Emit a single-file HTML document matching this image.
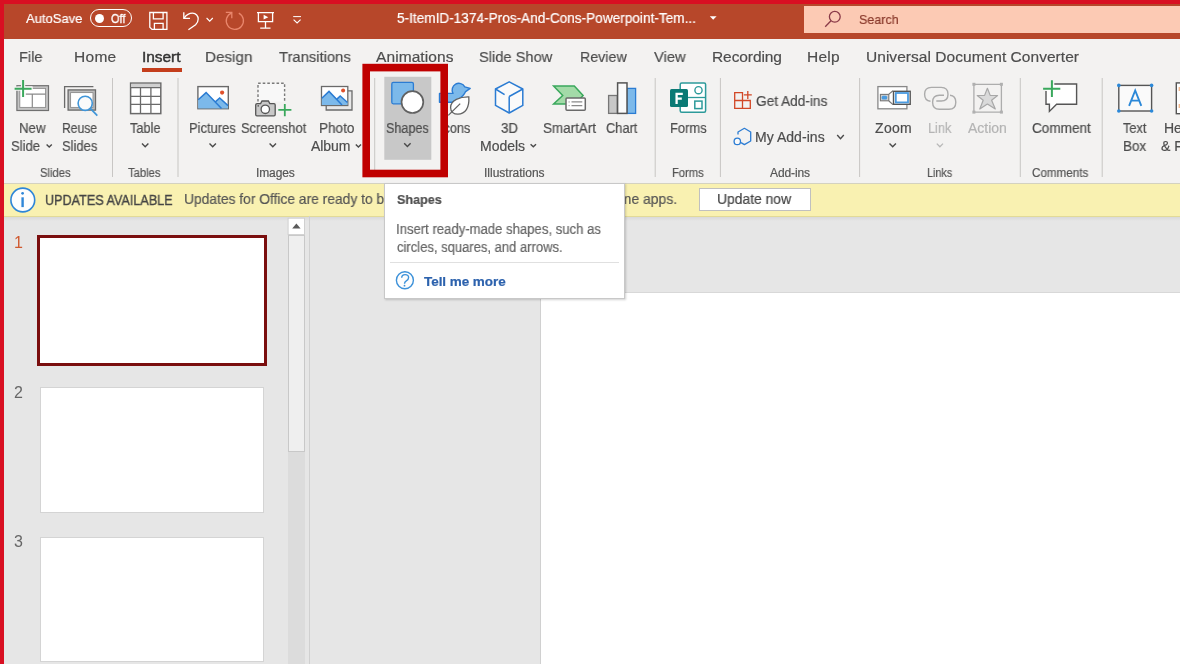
<!DOCTYPE html>
<html><head><meta charset="utf-8"><style>
html,body{margin:0;padding:0;width:1180px;height:664px;overflow:hidden;background:#e6e6e6;position:relative}
.t{position:absolute;white-space:nowrap;font-family:"Liberation Sans",sans-serif;will-change:transform;-webkit-text-stroke:0.2px currentColor}
.b{position:absolute}
svg{position:absolute;overflow:visible}
</style></head><body>
<!-- title bar -->
<div class="b" style="left:0;top:0;width:1180px;height:39px;background:#b7472a"></div>
<div class="b" style="left:804px;top:6px;width:376px;height:26.5px;background:#fccab4"></div>
<div class="b" style="left:90px;top:9px;width:40px;height:16px;border:1.4px solid #fff;border-radius:10px"></div>
<div class="b" style="left:94.6px;top:13.7px;width:9.2px;height:9.2px;border-radius:50%;background:#fff"></div>
<svg width="1180" height="664" viewBox="0 0 1180 664" style="left:0;top:0">
<g fill="none" stroke="#fff" stroke-width="1.3" stroke-linejoin="miter">
 <path d="M149.8 12.5 H166.9 V29.4 H152 L149.8 27.2 Z"/>
 <path d="M153.4 12.5 V18.9 H163.1 V12.5"/>
 <path d="M154.4 29.4 V23.4 H163.1 V29.4"/>
 <path d="M183.8 12.2 V18.4 H190"/>
 <path d="M184.2 18 C186 15.5 189 13.2 192.5 13.2 C196 13.2 198.2 16 198.2 19 C198.2 21.5 197 23.3 195.6 24.7 L188.4 29.8"/>
 <path d="M206.6 18 L209.7 21.1 L212.8 18" stroke-width="1.1"/>
 <path d="M257 12.6 H274 M258.4 12.6 V21.6 H272.6 V12.6 M265.5 21.6 V28.2 M260.2 28.2 H270.5"/>
 <path d="M293.2 16.6 H301" stroke-width="1"/>
 <path d="M293.6 19.6 L297.1 23 L300.6 19.6" stroke-width="1.1"/>
</g>
<path d="M263.6 14.8 L268.3 17.2 L263.6 19.6 Z" fill="#fff"/>
<g fill="none" stroke="#e9866c" stroke-width="1.3">
 <path d="M238.8 13.2 A8.6 8.6 0 1 1 231.8 12.8"/>
 <path d="M225.8 12.4 H231.8 V18.2"/>
</g>
<path d="M709.8 16.2 H716.6 L713.2 19.8 Z" fill="#fff"/>
<g fill="none" stroke="#8a3a48" stroke-width="1.3">
 <circle cx="834.8" cy="16.8" r="5.4"/>
 <path d="M831 20.8 L825.2 26.8"/>
</g>
</svg>
<!-- ribbon -->
<div class="b" style="left:0;top:39px;width:1180px;height:144px;background:#f3f2f1"></div>
<div class="b" style="left:142px;top:68px;width:40px;height:4px;background:#c43e1c"></div>
<svg width="1180" height="664" viewBox="0 0 1180 664" style="left:0;top:0">
<!-- separators -->
<g fill="#c8c6c4">
 <rect x="112" y="78" width="1" height="99"/>
 <rect x="177.5" y="78" width="1" height="99"/>
 <rect x="374.2" y="78" width="1" height="92"/>
 <rect x="654.7" y="78" width="1" height="99"/>
 <rect x="719.9" y="78" width="1" height="99"/>
 <rect x="859.1" y="78" width="1" height="99"/>
 <rect x="1019.8" y="78" width="1" height="99"/>
 <rect x="1101.7" y="78" width="1" height="99"/>
</g>
<!-- shapes button bg -->
<rect x="384.3" y="76.8" width="47" height="83" fill="#c8c8c8"/>

<!-- New Slide -->
<rect x="16.9" y="85.7" width="31.6" height="24.8" fill="#c4c4c4" stroke="#707070" stroke-width="1.2"/>
<rect x="19.8" y="88.4" width="25.8" height="19" fill="#fff" stroke="#8c8c8c" stroke-width="0.9"/>
<path d="M25.7 94.1 H45.8 M32.3 94.1 V107.8" fill="none" stroke="#8a8a8a" stroke-width="1.2"/>
<path d="M14 88.7 H32.5 M23.1 79.5 V97.8" stroke="#f3f2f1" stroke-width="4.2" fill="none"/>
<path d="M23.1 88.7 H32.5 M23.1 88.7 V97.8" stroke="#fff" stroke-width="4.2" fill="none"/>
<path d="M14.6 88.7 H31.6 M23.1 80 V97.1" stroke="#3aa85c" stroke-width="2" fill="none"/>

<!-- Reuse Slides -->
<path d="M64.6 108.1 V86.6 H93.4" fill="none" stroke="#6a6a6a" stroke-width="1.3"/>
<rect x="68.1" y="89.9" width="27.4" height="20.2" fill="#bdbdbd" stroke="#6a6a6a" stroke-width="1.3"/>
<rect x="70.6" y="92.6" width="22.4" height="14.8" fill="#fff" stroke="#8c8c8c" stroke-width="0.9"/>
<circle cx="85.2" cy="103.3" r="7.1" fill="#fafafa" stroke="#3f95d8" stroke-width="1.6"/>
<path d="M90.3 108.4 L97.3 115.6" stroke="#3f95d8" stroke-width="1.7"/>

<!-- Table -->
<rect x="130.6" y="83.1" width="30.2" height="30.5" fill="#fff" stroke="#6a6a6a" stroke-width="1.5"/>
<rect x="131.3" y="83.8" width="28.8" height="3.6" fill="#d0d0d0"/>
<path d="M130.6 87.6 H160.8 M130.6 96.3 H160.8 M130.6 104.4 H160.8 M140.5 87.6 V113.6 M150.9 87.6 V113.6" stroke="#6a6a6a" stroke-width="1.3" fill="none"/>

<!-- Pictures -->
<rect x="197.9" y="86.6" width="30.4" height="22.1" fill="#fff" stroke="#6a6a6a" stroke-width="1.4"/>
<path d="M198.2 99.7 L206.1 92.6 L215.6 101.6 L219.7 97.9 L228 105.6 V108.4 H198.2 Z" fill="#7cb9ea"/>
<path d="M198.2 99.7 L206.1 92.6 L221.5 108.4 M215.6 101.6 L219.7 97.9 L228 105.6" fill="none" stroke="#2b7cd3" stroke-width="1.5"/>
<circle cx="222.1" cy="92.6" r="2.1" fill="#e0502a"/>

<!-- Screenshot -->
<path d="M258 101.5 V83.2 H284.6 V101.5" fill="#f8f8f8" stroke="#7a7a7a" stroke-width="1.4" stroke-dasharray="2.6 2"/>
<path d="M255.7 105 Q255.7 103.6 257.1 103.6 H260.6 L262 101 H268.4 L269.8 103.6 H274 Q275.2 103.6 275.2 105 V114.6 Q275.2 115.8 274 115.8 H256.9 Q255.7 115.8 255.7 114.6 Z" fill="#c8c8c8" stroke="#555" stroke-width="1.3"/>
<circle cx="265.3" cy="109.3" r="4.2" fill="#fff" stroke="#555" stroke-width="1.3"/>
<circle cx="258.2" cy="105.9" r="0.8" fill="#555"/>
<path d="M278.3 109.9 H291.4 M284.8 103.9 V116.2" stroke="#3aa85c" stroke-width="1.8" fill="none"/>

<!-- Photo Album -->
<path d="M347.8 90.9 H352 V110 H326.2 V105.5" fill="#e8e8e8" stroke="#6a6a6a" stroke-width="1.3"/>
<rect x="321.5" y="86.5" width="26.3" height="19" fill="#fff" stroke="#6a6a6a" stroke-width="1.3"/>
<path d="M321.8 98.2 L329 91.4 L337.2 98.9 L340.2 96 L347.5 102.5 V105 H321.8 Z" fill="#7cb9ea"/>
<path d="M321.8 98.2 L329 91.4 L342 105 M337.2 98.9 L340.2 96 L347.5 102.5" fill="none" stroke="#2b7cd3" stroke-width="1.5"/>
<circle cx="343.1" cy="90.6" r="2" fill="#e0502a"/>

<!-- Shapes -->
<rect x="391.8" y="82.4" width="21.6" height="21.4" rx="1.5" fill="#7cb9ea" stroke="#2b7cd3" stroke-width="1.3"/>
<circle cx="412.4" cy="102.1" r="10.9" fill="#fff" stroke="#616161" stroke-width="1.7"/>

<!-- Icons -->
<path d="M439.5 102.2 V93.4 H453 A6.6 6.6 0 1 1 464.8 86.8 L470.2 88.4 L465.6 91.6 Q463.6 96.4 458.4 99.2 L452.4 102.2 Z" fill="#7cb9ea" stroke="#2b7cd3" stroke-width="1.4" stroke-linejoin="round"/>
<path d="M468.8 96.8 C460 96.6 450.6 100.2 450.6 107.4 C450.6 111.8 453.8 114.1 457.9 114.1 C465.2 114.1 469.6 108 468.8 96.8 Z" fill="#fff" stroke="#616161" stroke-width="1.3"/>
<path d="M460.2 103.6 L448.3 115.4" stroke="#616161" stroke-width="1.3"/>

<!-- 3D Models -->
<path d="M509.2 81.8 L522.8 89 V105.4 L509.2 113 L495.5 105.4 V89 Z" fill="#fafafa" stroke="#2b7cd3" stroke-width="1.5" stroke-linejoin="round"/>
<path d="M509.2 96.5 L522.8 89 M509.2 96.5 V113 M495.5 89 L504.6 94.6" fill="none" stroke="#2b7cd3" stroke-width="1.5"/>

<!-- SmartArt -->
<path d="M553.6 86 H574.3 L583.1 95.5 L575 104 H553.6 L562.7 95.5 Z" fill="#a3dba8" stroke="#3aa85c" stroke-width="1.5" stroke-linejoin="miter"/>
<rect x="566" y="97.9" width="19.3" height="12.3" rx="1" fill="#fff" stroke="#6a6a6a" stroke-width="1.5"/>
<path d="M571.5 101.9 H582.3 M571.5 105.6 H582.3" stroke="#8a8a8a" stroke-width="1.1"/>
<circle cx="569.1" cy="101.9" r="0.6" fill="#8a8a8a"/><circle cx="569.1" cy="105.6" r="0.6" fill="#8a8a8a"/>

<!-- Chart -->
<rect x="608.6" y="95.5" width="8.7" height="17.9" fill="#c8c8c8" stroke="#777" stroke-width="1.3"/>
<rect x="627" y="88.4" width="8.6" height="25" fill="#7cb9ea" stroke="#2b7cd3" stroke-width="1.3"/>
<rect x="617.6" y="82.9" width="9.4" height="30.5" fill="#fafafa" stroke="#555" stroke-width="1.5"/>

<!-- Forms -->
<rect x="680.2" y="83" width="25.4" height="29.2" rx="1.5" fill="#fff" stroke="#2d9a9a" stroke-width="1.5"/>
<path d="M680.2 97.5 H705.6" stroke="#2d9a9a" stroke-width="1.3"/>
<circle cx="698.5" cy="90.2" r="3.6" fill="none" stroke="#2d9a9a" stroke-width="1.4"/>
<rect x="694.8" y="101.1" width="7.2" height="7.5" fill="none" stroke="#2d9a9a" stroke-width="1.5"/>
<rect x="670" y="89" width="18" height="18" rx="1.5" fill="#0b7a75"/>
<path d="M676.6 104 V93.8 H682.8 M676.6 98.6 H681.8" fill="none" stroke="#fff" stroke-width="2.3"/>

<!-- Get Add-ins -->
<path d="M734.7 92.7 H742.5 V108.3 H734.7 Z M734.7 100.5 H750.3 V108.3 H742.5" fill="none" stroke="#d24726" stroke-width="1.3"/>
<path d="M743.8 94.9 H751.8 M747.8 90.9 V98.9" stroke="#d24726" stroke-width="1.3"/>

<!-- My Add-ins -->
<path d="M738 134.5 V132 L744.4 128.3 L750.7 132 V141 L744.4 144.6 L741 142.6" fill="none" stroke="#2b7cd3" stroke-width="1.3" stroke-linejoin="round"/>
<circle cx="737.3" cy="141.4" r="3.2" fill="#fafafa" stroke="#2b7cd3" stroke-width="1.3"/>

<!-- Zoom -->
<rect x="877.9" y="86.6" width="29" height="22.2" fill="#fff" stroke="#888" stroke-width="1.3"/>
<path d="M888.9 94.1 L893 90.8 M888.9 101 L893 104.6" stroke="#777" stroke-width="1.2"/>
<rect x="880.4" y="94.4" width="8.4" height="6.4" fill="#d0d0d0" stroke="#777" stroke-width="1.1"/>
<rect x="881.6" y="95.8" width="5.6" height="3.8" rx="1.5" fill="#4a9be0"/>
<rect x="893.5" y="91.3" width="16.7" height="13" fill="#fff" stroke="#555" stroke-width="1.4"/>
<rect x="895.8" y="93" width="12.2" height="9.4" fill="#fff" stroke="#4a9be0" stroke-width="1.8"/>

<!-- Link (disabled) -->
<g fill="none" stroke="#ababab" stroke-width="1.4">
 <path d="M930.5 101.2 Q924.6 100.6 924.6 94.2 Q924.6 87.4 931.4 87.4 H941.2 Q948 87.4 948 94.2 Q948 101 941.2 101 H936.3"/>
 <path d="M950 95.3 Q955.8 96 955.8 102.2 Q955.8 109.2 949 109.2 H939.4 Q932.6 109.2 932.6 102.2 Q932.6 95.2 939.4 95.2 H944"/>
</g>

<!-- Action (disabled) -->
<path d="M973.9 85 V111.5 M1001.4 85 V111.5 M975 84.4 H1000.3 M975 112.1 H1000.3" stroke="#adadad" stroke-width="1.3"/>
<g fill="#b0b0b0"><rect x="972.4" y="82.8" width="3" height="3"/><rect x="999.9" y="82.8" width="3" height="3"/><rect x="972.4" y="110.6" width="3" height="3"/><rect x="999.9" y="110.6" width="3" height="3"/></g>
<path d="M987.4 88.3 L990.2 95.4 L997.6 95.5 L991.6 100.2 L995.3 109 L987.4 104 L979.8 109 L983.2 100.2 L977.2 95.5 L984.6 95.4 Z" fill="#dadada" stroke="#a8a8a8" stroke-width="1.2" stroke-linejoin="round"/>

<!-- Comment -->
<path d="M1054.3 84 H1076.6 V104.2 H1056.6 L1049.4 111.4 V104.2 H1046 V91.1" fill="#fff" stroke="#555" stroke-width="1.4"/>
<path d="M1043.1 88.7 H1060.3 M1051.9 80.2 V97.1" stroke="#3aa85c" stroke-width="2" fill="none"/>

<!-- Text Box -->
<rect x="1118.8" y="85.4" width="32.8" height="25.6" fill="#fafafa" stroke="#555" stroke-width="1.4"/>
<g fill="#2b88d8"><circle cx="1118.8" cy="85.4" r="1.8"/><circle cx="1151.6" cy="85.4" r="1.8"/><circle cx="1118.8" cy="111" r="1.8"/><circle cx="1151.6" cy="111" r="1.8"/></g>
<path d="M1129.1 105.9 L1135.2 90.5 L1141.3 105.9 M1131.2 100.6 H1139.2" fill="none" stroke="#2b88d8" stroke-width="1.9"/>

<!-- Header & Footer (partial) -->
<rect x="1176.3" y="82.9" width="12" height="30.8" fill="#fff" stroke="#555" stroke-width="1.4"/>
<rect x="1178.6" y="87" width="2" height="4" fill="#f2b88f"/>
<rect x="1178.6" y="104" width="2" height="4" fill="#f2b88f"/>

<!-- chevrons -->
<g fill="none" stroke="#4a4a4a" stroke-width="1.4">
 <path d="M46.6 144.6 L49.2 147.1 L51.8 144.6"/>
 <path d="M142 143.6 L145.2 146.8 L148.4 143.6"/>
 <path d="M209.5 143.6 L212.7 146.8 L215.9 143.6"/>
 <path d="M269.6 143.6 L272.8 146.8 L276 143.6"/>
 <path d="M355.8 144.6 L358.4 147.1 L361 144.6"/>
 <path d="M404.2 143.3 L407.4 146.5 L410.6 143.3"/>
 <path d="M530.6 144.2 L533.3 146.8 L536 144.2"/>
 <path d="M837.2 135 L840.5 138.6 L843.8 135"/>
 <path d="M889.5 143.6 L892.7 146.8 L895.9 143.6"/>
</g>
<path d="M936.8 143.6 L939.9 146.8 L943 143.6" fill="none" stroke="#b8b8b8" stroke-width="1.3"/>
</svg>
<!-- update bar -->
<div class="b" style="left:0;top:216px;width:1180px;height:5px;background:linear-gradient(#d6d6d6,#e6e6e6)"></div>
<div class="b" style="left:0;top:182.5px;width:1180px;height:32px;background:#f9f1b1;border-top:1px solid #d4d2c0;border-bottom:0.6px solid #e2da98"></div>
<div class="b" style="left:699.2px;top:187.8px;width:110.3px;height:20.8px;background:#fff;border:1px solid #c0c0c0"></div>
<svg width="1180" height="664" viewBox="0 0 1180 664" style="left:0;top:0">
<circle cx="22.8" cy="200" r="11.9" fill="#fdfdfd" stroke="#2e86d8" stroke-width="1.6"/>
<circle cx="22.6" cy="193.3" r="1.35" fill="#2e86d8"/>
<path d="M22.6 197.3 V207.1" stroke="#2e86d8" stroke-width="2.4"/>
</svg>
<!-- panes -->
<div class="b" style="left:308.5px;top:216px;width:1px;height:448px;background:#d0d0d0"></div>
<div class="b" style="left:288px;top:235px;width:15px;height:215px;background:#efefef;border:1px solid #c8c8c8"></div>
<div class="b" style="left:288px;top:452px;width:17px;height:212px;background:#dcdcdc"></div>
<div class="b" style="left:37.3px;top:234.7px;width:223.4px;height:125.7px;background:#fff;border:3px solid #7a0e0e"></div>
<div class="b" style="left:40.1px;top:387.2px;width:221.5px;height:123.5px;background:#fff;border:1px solid #d4d4d4"></div>
<div class="b" style="left:40.1px;top:536.8px;width:221.5px;height:123.5px;background:#fff;border:1px solid #d4d4d4"></div>
<div class="b" style="left:540.4px;top:291.6px;width:640px;height:400px;background:#fff;border-left:1px solid #d0d0d0;border-top:1px solid #d8d8d8"></div>
<svg width="1180" height="664" viewBox="0 0 1180 664" style="left:0;top:0">
<rect x="288.1" y="218.2" width="16.4" height="16.4" fill="#fff" stroke="#d0d0d0" stroke-width="1"/>
<path d="M296.4 223.6 L300.6 228.6 H292.2 Z" fill="#5a5a5a"/>
</svg>
<div class="t" style="left:26.00px;top:12.27px;font-size:13.5px;line-height:13.5px;color:#fff;font-weight:400;letter-spacing:0.000px;transform:scaleX(0.9650);transform-origin:0 0;">AutoSave</div>
<div class="t" style="left:111.40px;top:12.64px;font-size:12px;line-height:12px;color:#fff;font-weight:400;letter-spacing:0.000px;transform:scaleX(0.9118);transform-origin:0 0;-webkit-text-stroke:0.35px currentColor;">Off</div>
<div class="t" style="left:397.00px;top:11.15px;font-size:14px;line-height:14px;color:#fff;font-weight:400;letter-spacing:0.000px;transform:scaleX(0.9725);transform-origin:0 0;">5-ItemID-1374-Pros-And-Cons-Powerpoint-Tem...</div>
<div class="t" style="left:858.60px;top:13.17px;font-size:13.5px;line-height:13.5px;color:#8a3a2c;font-weight:400;letter-spacing:0.000px;transform:scaleX(0.9275);transform-origin:0 0;">Search</div>
<div class="t" style="left:18.56px;top:48.68px;font-size:15.5px;line-height:15.5px;color:#4d4d4d;font-weight:400;letter-spacing:0.000px;transform:scaleX(0.9420);transform-origin:0 0;">File</div>
<div class="t" style="left:74.40px;top:48.68px;font-size:15.5px;line-height:15.5px;color:#4d4d4d;font-weight:400;letter-spacing:0.291px;">Home</div>
<div class="t" style="left:205.42px;top:48.68px;font-size:15.5px;line-height:15.5px;color:#4d4d4d;font-weight:400;letter-spacing:0.000px;transform:scaleX(0.9822);transform-origin:0 0;">Design</div>
<div class="t" style="left:278.80px;top:48.68px;font-size:15.5px;line-height:15.5px;color:#4d4d4d;font-weight:400;letter-spacing:0.000px;transform:scaleX(0.9539);transform-origin:0 0;">Transitions</div>
<div class="t" style="left:376.30px;top:48.68px;font-size:15.5px;line-height:15.5px;color:#4d4d4d;font-weight:400;letter-spacing:0.086px;">Animations</div>
<div class="t" style="left:479.30px;top:48.68px;font-size:15.5px;line-height:15.5px;color:#4d4d4d;font-weight:400;letter-spacing:0.000px;transform:scaleX(0.9457);transform-origin:0 0;">Slide Show</div>
<div class="t" style="left:579.58px;top:48.68px;font-size:15.5px;line-height:15.5px;color:#4d4d4d;font-weight:400;letter-spacing:0.000px;transform:scaleX(0.9185);transform-origin:0 0;">Review</div>
<div class="t" style="left:653.90px;top:48.68px;font-size:15.5px;line-height:15.5px;color:#4d4d4d;font-weight:400;letter-spacing:0.000px;transform:scaleX(0.9525);transform-origin:0 0;">View</div>
<div class="t" style="left:711.70px;top:48.68px;font-size:15.5px;line-height:15.5px;color:#4d4d4d;font-weight:400;letter-spacing:-0.091px;">Recording</div>
<div class="t" style="left:807.00px;top:48.68px;font-size:15.5px;line-height:15.5px;color:#4d4d4d;font-weight:400;letter-spacing:0.247px;">Help</div>
<div class="t" style="left:865.60px;top:48.68px;font-size:15.5px;line-height:15.5px;color:#4d4d4d;font-weight:400;letter-spacing:0.039px;">Universal Document Converter</div>
<div class="t" style="left:141.70px;top:48.68px;font-size:15.5px;line-height:15.5px;color:#333;font-weight:400;letter-spacing:-0.052px;-webkit-text-stroke:0.45px currentColor;">Insert</div>
<div class="t" style="left:18.65px;top:120.95px;font-size:14px;line-height:14px;color:#4d4d4d;font-weight:400;letter-spacing:0.000px;transform:scaleX(0.9464);transform-origin:0 0;">New</div>
<div class="t" style="left:61.84px;top:120.95px;font-size:14px;line-height:14px;color:#4d4d4d;font-weight:400;letter-spacing:0.000px;transform:scaleX(0.8644);transform-origin:0 0;">Reuse</div>
<div class="t" style="left:129.90px;top:120.95px;font-size:14px;line-height:14px;color:#4d4d4d;font-weight:400;letter-spacing:0.000px;transform:scaleX(0.9114);transform-origin:0 0;">Table</div>
<div class="t" style="left:188.67px;top:120.95px;font-size:14px;line-height:14px;color:#4d4d4d;font-weight:400;letter-spacing:0.000px;transform:scaleX(0.9259);transform-origin:0 0;">Pictures</div>
<div class="t" style="left:240.50px;top:120.95px;font-size:14px;line-height:14px;color:#4d4d4d;font-weight:400;letter-spacing:0.000px;transform:scaleX(0.9206);transform-origin:0 0;">Screenshot</div>
<div class="t" style="left:319.03px;top:120.95px;font-size:14px;line-height:14px;color:#4d4d4d;font-weight:400;letter-spacing:0.000px;transform:scaleX(0.9693);transform-origin:0 0;">Photo</div>
<div class="t" style="left:386.30px;top:120.95px;font-size:14px;line-height:14px;color:#4d4d4d;font-weight:400;letter-spacing:0.000px;transform:scaleX(0.8993);transform-origin:0 0;">Shapes</div>
<div class="t" style="left:440.10px;top:120.95px;font-size:14px;line-height:14px;color:#4d4d4d;font-weight:400;letter-spacing:0.000px;transform:scaleX(0.9026);transform-origin:0 0;">Icons</div>
<div class="t" style="left:500.70px;top:120.95px;font-size:14px;line-height:14px;color:#4d4d4d;font-weight:400;letter-spacing:0.000px;transform:scaleX(0.9502);transform-origin:0 0;">3D</div>
<div class="t" style="left:542.90px;top:120.95px;font-size:14px;line-height:14px;color:#4d4d4d;font-weight:400;letter-spacing:0.000px;transform:scaleX(0.9614);transform-origin:0 0;">SmartArt</div>
<div class="t" style="left:606.40px;top:120.95px;font-size:14px;line-height:14px;color:#4d4d4d;font-weight:400;letter-spacing:0.000px;transform:scaleX(0.9172);transform-origin:0 0;">Chart</div>
<div class="t" style="left:669.68px;top:120.95px;font-size:14px;line-height:14px;color:#4d4d4d;font-weight:400;letter-spacing:0.000px;transform:scaleX(0.9234);transform-origin:0 0;">Forms</div>
<div class="t" style="left:874.70px;top:120.95px;font-size:14px;line-height:14px;color:#4d4d4d;font-weight:400;letter-spacing:0.325px;">Zoom</div>
<div class="t" style="left:1031.50px;top:120.95px;font-size:14px;line-height:14px;color:#4d4d4d;font-weight:400;letter-spacing:0.000px;transform:scaleX(0.9689);transform-origin:0 0;">Comment</div>
<div class="t" style="left:1123.00px;top:120.95px;font-size:14px;line-height:14px;color:#4d4d4d;font-weight:400;letter-spacing:0.000px;transform:scaleX(0.9113);transform-origin:0 0;">Text</div>
<div class="t" style="left:1164.40px;top:120.95px;font-size:14px;line-height:14px;color:#4d4d4d;font-weight:400;letter-spacing:0.000px;">He</div>
<div class="t" style="left:928.29px;top:120.95px;font-size:14px;line-height:14px;color:#b4b4b4;font-weight:400;letter-spacing:0.000px;transform:scaleX(0.9072);transform-origin:0 0;">Link</div>
<div class="t" style="left:968.30px;top:120.95px;font-size:14px;line-height:14px;color:#b4b4b4;font-weight:400;letter-spacing:-0.005px;">Action</div>
<div class="t" style="left:11.30px;top:139.15px;font-size:14px;line-height:14px;color:#4d4d4d;font-weight:400;letter-spacing:0.000px;transform:scaleX(0.9348);transform-origin:0 0;">Slide</div>
<div class="t" style="left:62.20px;top:139.15px;font-size:14px;line-height:14px;color:#4d4d4d;font-weight:400;letter-spacing:0.000px;transform:scaleX(0.9258);transform-origin:0 0;">Slides</div>
<div class="t" style="left:310.80px;top:139.15px;font-size:14px;line-height:14px;color:#4d4d4d;font-weight:400;letter-spacing:-0.080px;">Album</div>
<div class="t" style="left:480.20px;top:139.15px;font-size:14px;line-height:14px;color:#4d4d4d;font-weight:400;letter-spacing:-0.006px;">Models</div>
<div class="t" style="left:1122.74px;top:139.15px;font-size:14px;line-height:14px;color:#4d4d4d;font-weight:400;letter-spacing:0.000px;transform:scaleX(0.9644);transform-origin:0 0;">Box</div>
<div class="t" style="left:1161.00px;top:139.15px;font-size:14px;line-height:14px;color:#4d4d4d;font-weight:400;letter-spacing:0.000px;">&amp; F</div>
<div class="t" style="left:755.50px;top:93.55px;font-size:14px;line-height:14px;color:#4d4d4d;font-weight:400;letter-spacing:0.000px;transform:scaleX(0.9753);transform-origin:0 0;">Get Add-ins</div>
<div class="t" style="left:754.50px;top:130.05px;font-size:14px;line-height:14px;color:#4d4d4d;font-weight:400;letter-spacing:0.042px;">My Add-ins</div>
<div class="t" style="left:39.80px;top:167.04px;font-size:12px;line-height:12px;color:#555;font-weight:400;letter-spacing:0.000px;transform:scaleX(0.9362);transform-origin:0 0;">Slides</div>
<div class="t" style="left:128.20px;top:167.04px;font-size:12px;line-height:12px;color:#555;font-weight:400;letter-spacing:0.000px;transform:scaleX(0.9341);transform-origin:0 0;">Tables</div>
<div class="t" style="left:255.60px;top:167.04px;font-size:12px;line-height:12px;color:#555;font-weight:400;letter-spacing:-0.110px;">Images</div>
<div class="t" style="left:483.60px;top:167.04px;font-size:12px;line-height:12px;color:#555;font-weight:400;letter-spacing:-0.008px;">Illustrations</div>
<div class="t" style="left:671.50px;top:167.04px;font-size:12px;line-height:12px;color:#555;font-weight:400;letter-spacing:0.000px;transform:scaleX(0.9325);transform-origin:0 0;">Forms</div>
<div class="t" style="left:769.60px;top:167.04px;font-size:12px;line-height:12px;color:#555;font-weight:400;letter-spacing:-0.115px;">Add-ins</div>
<div class="t" style="left:926.80px;top:167.04px;font-size:12px;line-height:12px;color:#555;font-weight:400;letter-spacing:0.000px;transform:scaleX(0.8996);transform-origin:0 0;">Links</div>
<div class="t" style="left:1032.30px;top:167.04px;font-size:12px;line-height:12px;color:#555;font-weight:400;letter-spacing:0.000px;transform:scaleX(0.9705);transform-origin:0 0;">Comments</div>
<div class="t" style="left:45.20px;top:192.65px;font-size:14px;line-height:14px;color:#444;font-weight:400;letter-spacing:0.000px;transform:scaleX(0.9011);transform-origin:0 0;-webkit-text-stroke:0.35px currentColor;">UPDATES AVAILABLE</div>
<div class="t" style="left:183.75px;top:192.23px;font-size:14.5px;line-height:14.5px;color:#555;font-weight:400;letter-spacing:0.000px;transform:scaleX(0.9525);transform-origin:0 0;">Updates for Office are ready to b</div>
<div class="t" style="left:605.16px;top:192.23px;font-size:14.5px;line-height:14.5px;color:#555;font-weight:400;letter-spacing:0.000px;transform:scaleX(0.9622);transform-origin:0 0;">some apps.</div>
<div class="t" style="left:716.64px;top:192.23px;font-size:14.5px;line-height:14.5px;color:#444;font-weight:400;letter-spacing:0.000px;transform:scaleX(0.9569);transform-origin:0 0;">Update now</div>
<div class="t" style="left:14.00px;top:234.76px;font-size:16px;line-height:16px;color:#d05a30;font-weight:400;letter-spacing:0.000px;-webkit-text-stroke:0;">1</div>
<div class="t" style="left:13.80px;top:384.56px;font-size:16px;line-height:16px;color:#666;font-weight:400;letter-spacing:0.000px;-webkit-text-stroke:0;">2</div>
<div class="t" style="left:13.80px;top:534.06px;font-size:16px;line-height:16px;color:#666;font-weight:400;letter-spacing:0.000px;-webkit-text-stroke:0;">3</div>
<!-- red highlight box -->
<svg width="1180" height="664" style="left:0;top:0"><rect x="366.2" y="67.6" width="78" height="105.9" fill="none" stroke="#c00000" stroke-width="7.6"/></svg>
<!-- tooltip -->
<div class="b" style="left:384.4px;top:183.4px;width:238.9px;height:113.4px;background:#fff;border:1px solid #c8c8c8;box-shadow:1px 1px 2px rgba(0,0,0,0.18)"></div>
<div class="b" style="left:389.7px;top:262px;width:229.3px;height:1px;background:#e0e0e0"></div>
<svg width="1180" height="664" viewBox="0 0 1180 664" style="left:0;top:0">
<circle cx="404.9" cy="280.2" r="8.5" fill="#fdfdfd" stroke="#3c91d9" stroke-width="1.4"/>
<path d="M401.7 277.8 Q401.7 274.6 405.1 274.6 Q408.6 274.6 408.6 277.6 Q408.6 279.6 406.3 280.8 Q404.5 281.8 404.5 283.8" fill="none" stroke="#3c91d9" stroke-width="1.4"/>
<circle cx="404.5" cy="285.7" r="0.9" fill="#3c91d9"/>
</svg>
<div class="t" style="left:396.90px;top:193.17px;font-size:13.5px;line-height:13.5px;color:#505050;font-weight:700;letter-spacing:0.000px;transform:scaleX(0.9324);transform-origin:0 0;">Shapes</div>
<div class="t" style="left:395.96px;top:222.15px;font-size:14px;line-height:14px;color:#666;font-weight:400;letter-spacing:0.000px;transform:scaleX(0.9367);transform-origin:0 0;">Insert ready-made shapes, such as</div>
<div class="t" style="left:396.90px;top:240.15px;font-size:14px;line-height:14px;color:#666;font-weight:400;letter-spacing:0.000px;transform:scaleX(0.9296);transform-origin:0 0;">circles, squares, and arrows.</div>
<div class="t" style="left:423.60px;top:275.17px;font-size:13.5px;line-height:13.5px;color:#2d62ad;font-weight:700;letter-spacing:-0.052px;">Tell me more</div>
<!-- red border -->
<div class="b" style="left:0;top:0;width:1180px;height:3.6px;background:#d90f22"></div>
<div class="b" style="left:0;top:0;width:3.7px;height:664px;background:#d90f22"></div>
</body></html>
